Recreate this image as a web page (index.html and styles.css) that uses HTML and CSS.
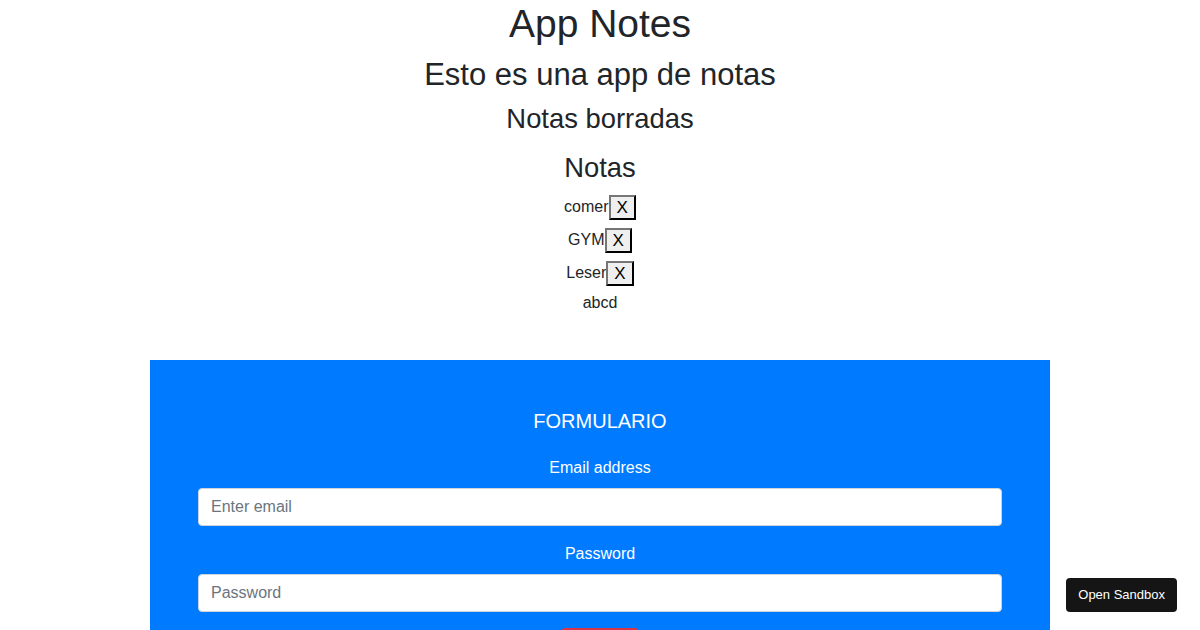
FILE: index.html
```html
<!DOCTYPE html>
<html lang="es">
<head>
    <meta charset="UTF-8">
    <meta name="viewport" content="width=device-width, initial-scale=1.0">
    <title>App Notes</title>
    <link rel="stylesheet" href="styles.css">
</head>
<body>
    <div class="app">
        <h1>App Notes</h1>
        <h2>Esto es una app de notas</h2>
        <h3>Notas borradas</h3>

        <!-- Lista de notas -->
        <div class="notes">
            <h3 class="notes-title">Notas</h3>
            <div class="note">comer<button class="btn-x">X</button></div>
            <div class="note">GYM<button class="btn-x">X</button></div>
            <div class="note">Leser<button class="btn-x">X</button></div>
            <div class="note note-plain">abcd</div>
        </div>

        <!-- Formulario -->
        <div class="form-box">
            <h5>FORMULARIO</h5>
            <div class="form-group">
                <label for="email">Email address</label>
                <input id="email" type="email" class="form-control" placeholder="Enter email">
            </div>
            <div class="form-group">
                <label for="password">Password</label>
                <input id="password" type="password" class="form-control" placeholder="Password">
            </div>
            <button class="btn-danger">Agregar</button>
        </div>
    </div>

    <a class="sandbox-btn" href="#">Open Sandbox</a>
</body>
</html>
```

FILE: styles.css
```css
body {
    font-family: 'Liberation Sans', Arial, sans-serif;
    color: #212529;
    background-color: #fff;
    margin: 0;
    padding: 0;
    font-size: 16px;
    line-height: 1.5;
}
.app {
    text-align: center;
}
h1, h2, h3, h5 {
    font-weight: 500;
    margin: 0 0 8px 0;
}
h1 {
    font-size: 39px;
    line-height: 48px;
}
h2 {
    font-size: 31px;
    line-height: 38.4px;
}
h3 {
    font-size: 27.4px;
    line-height: 33.6px;
}
.notes-title {
    margin-top: 15px;
    margin-bottom: 6px;
}
.note {
    display: flex;
    justify-content: center;
    align-items: center;
    height: 33px;
}
.note-plain {
    height: 27px;
}
.btn-x {
    font-family: 'Liberation Sans', Arial, sans-serif;
    font-size: 17px;
    line-height: 1;
    padding: 2px 6px;
    height: 25px;
    background-color: #efefef;
    color: #000;
    border: 2px outset #555;
    border-color: #767676 #555 #555 #767676;
}
.form-box {
    width: 900px;
    margin: 43px auto 0;
    padding: 49px 48px 24px;
    box-sizing: border-box;
    background-color: #007bff;
    color: #fff;
}
h5 {
    font-size: 20px;
    font-weight: 400;
    line-height: 24px;
    margin-bottom: 23px;
}
.form-group {
    margin-bottom: 16px;
}
.form-group label {
    display: block;
    margin-bottom: 8px;
}
.form-control {
    display: block;
    width: 100%;
    height: 38px;
    box-sizing: border-box;
    padding: 6px 12px;
    font-family: 'Liberation Sans', Arial, sans-serif;
    font-size: 16px;
    color: #495057;
    background-color: #fff;
    border: 1px solid #ced4da;
    border-radius: 4px;
}
.form-control::placeholder {
    color: #6c757d;
}
.btn-danger {
    font-family: 'Liberation Sans', Arial, sans-serif;
    font-size: 16px;
    padding: 6px 10px;
    color: #fff;
    background-color: #dc3545;
    border: 1px solid #dc3545;
    border-radius: 4px;
}
.sandbox-btn {
    position: fixed;
    right: 23px;
    bottom: 18px;
    padding: 9px 12px;
    font-family: 'Liberation Sans', Arial, sans-serif;
    font-size: 13px;
    line-height: 16px;
    color: #fff;
    background-color: #151515;
    border-radius: 4px;
    text-decoration: none;
}
```
